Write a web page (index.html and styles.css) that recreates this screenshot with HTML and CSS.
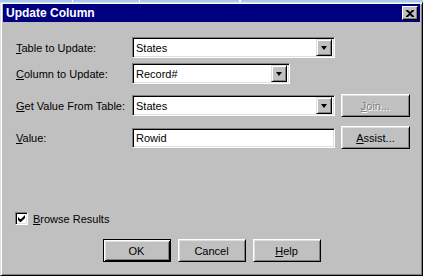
FILE: index.html
```html
<!DOCTYPE html>
<html>
<head>
<meta charset="utf-8">
<link rel="stylesheet" href="styles.css">
</head>
<body>
<div class="strip"><span class="seg s1"></span><span class="seg s2"></span><span class="seg s3"></span><span class="seg s4"></span></div>
<div class="window">
  <div class="titlebar">
    <span class="title">Update Column</span>
    <span class="close"><svg width="8" height="7" viewBox="0 0 8 7"><path d="M0 0h2l2 2 2-2h2v1l-3 2.5 3 2.5v1h-2l-2-2-2 2h-2v-1l3-2.5-3-2.5z" fill="#000"/></svg></span>
  </div>
  <div class="content">
    <div class="form">
      <div class="row r1">
        <span class="label"><u>T</u>able to Update:</span>
        <div class="combo wide"><span class="val">States</span><span class="drop"><i></i></span></div>
      </div>
      <div class="row r2">
        <span class="label"><u>C</u>olumn to Update:</span>
        <div class="combo narrow"><span class="val">Record#</span><span class="drop"><i></i></span></div>
      </div>
      <div class="row r3">
        <span class="label"><u>G</u>et Value From Table:</span>
        <div class="combo wide"><span class="val">States</span><span class="drop"><i></i></span></div>
        <span class="btn side disabled"><span class="dtext"><u>J</u>oin...</span></span>
      </div>
      <div class="row r4">
        <span class="label"><u>V</u>alue:</span>
        <div class="field wide"><span class="val">Rowid</span></div>
        <span class="btn side"><span><u>A</u>ssist...</span></span>
      </div>
    </div>
    <div class="check">
      <span class="box"><svg width="7" height="7" viewBox="0 0 7 7"><path d="M0 2v3l2 2h1l4-4v-3l-4 4h-1z" fill="#000"/></svg></span>
      <span class="clabel"><u>B</u>rowse Results</span>
    </div>
    <div class="buttons">
      <span class="btn main default"><span>OK</span></span>
      <span class="btn main"><span>Cancel</span></span>
      <span class="btn main"><span><u>H</u>elp</span></span>
    </div>
  </div>
</div>
</body>
</html>
```
FILE: styles.css
```css
html, body {
  margin: 0;
  padding: 0;
}
body {
  width: 423px;
  height: 276px;
  overflow: hidden;
  background: #c0c0c0;
  font-family: "Liberation Sans", Arial, sans-serif;
  font-size: 11px;
  color: #000;
}
u { text-decoration: underline; text-underline-offset: 1px; }
.strip {
  height: 2px;
  background: #a6caf0;
  display: flex;
}
.seg { height: 2px; border-right: 1px solid #fff; }
.s1 { width: 72px; }
.s2 { width: 66px; }
.s3 { width: 99px; }
.s4 { width: 0; }
.window {
  box-sizing: border-box;
  height: 274px;
  border: 1px solid;
  border-color: #dfdfdf #000 #000 #dfdfdf;
  box-shadow: inset 1px 1px #fff, inset -1px -1px #808080;
  padding: 1px 2px 2px 2px;
  display: flex;
  flex-direction: column;
}
.titlebar {
  height: 18px;
  background: #000080;
  display: flex;
  align-items: center;
  justify-content: space-between;
  padding: 0 2px 0 3px;
  flex: none;
}
.title {
  color: #fff;
  font-weight: bold;
  font-size: 12px;
}
.close {
  box-sizing: border-box;
  width: 16px;
  height: 14px;
  background: #c0c0c0;
  border: 1px solid;
  border-color: #fff #000 #000 #fff;
  box-shadow: inset -1px -1px #808080;
  display: flex;
  align-items: center;
  justify-content: center;
  padding-right: 1px;
}
.close svg { display: block; }
.content {
  flex: 1;
  padding: 15px 0 0 13px;
  display: flex;
  flex-direction: column;
}
.form {
  display: flex;
  flex-direction: column;
}
.row {
  display: grid;
  grid-template-columns: 110px 203px 69px;
  column-gap: 6px;
  align-items: center;
}
.r1 { height: 21px; }
.r2 { height: 21px; margin-top: 5px; }
.r3 { height: 23px; margin-top: 10px; }
.r4 { height: 23px; margin-top: 9px; }
.label { white-space: nowrap; }
.combo, .field {
  box-sizing: border-box;
  height: 21px;
  background: #fff;
  border: 1px solid;
  border-color: #808080 #fff #fff #808080;
  box-shadow: inset 1px 1px #000, inset -1px -1px #dfdfdf;
  display: flex;
  align-items: center;
  padding: 1px 2px 1px 1px;
}
.field { height: 20px; }
.narrow { width: 158px; }
.val { flex: 1; padding-left: 2px; }
.drop {
  box-sizing: border-box;
  width: 16px;
  height: 17px;
  background: #c0c0c0;
  border: 1px solid;
  border-color: #dfdfdf #000 #000 #dfdfdf;
  box-shadow: inset 1px 1px #fff, inset -1px -1px #808080;
  display: flex;
  align-items: center;
  justify-content: center;
}
.drop i {
  width: 0;
  height: 0;
  border-left: 3.5px solid transparent;
  border-right: 3.5px solid transparent;
  border-top: 4px solid #000;
  margin-top: 1px;
}
.btn {
  box-sizing: border-box;
  height: 23px;
  background: #c0c0c0;
  border: 1px solid;
  border-color: #fff #000 #000 #fff;
  box-shadow: inset 1px 1px #dfdfdf, inset -1px -1px #808080;
  display: flex;
  align-items: center;
  justify-content: center;
}
.disabled .dtext {
  color: #808080;
  text-shadow: 1px 1px #fff;
}
.check {
  margin-top: 63px;
  margin-left: -1px;
  display: flex;
  align-items: center;
  height: 13px;
}
.box {
  box-sizing: border-box;
  width: 13px;
  height: 13px;
  background: #fff;
  border: 1px solid;
  border-color: #808080 #fff #fff #808080;
  box-shadow: inset 1px 1px #000, inset -1px -1px #dfdfdf;
  display: flex;
  align-items: center;
  justify-content: center;
}
.box svg { display: block; }
.clabel { margin-left: 5px; }
.buttons {
  margin-top: 14px;
  margin-left: -13px;
  display: flex;
  justify-content: center;
  gap: 7px;
}
.main { width: 68px; }
.default {
  border: 1px solid #000;
  box-shadow: inset 1px 1px #fff, inset -1px -1px #000, inset 2px 2px #dfdfdf, inset -2px -2px #808080;
}
```
